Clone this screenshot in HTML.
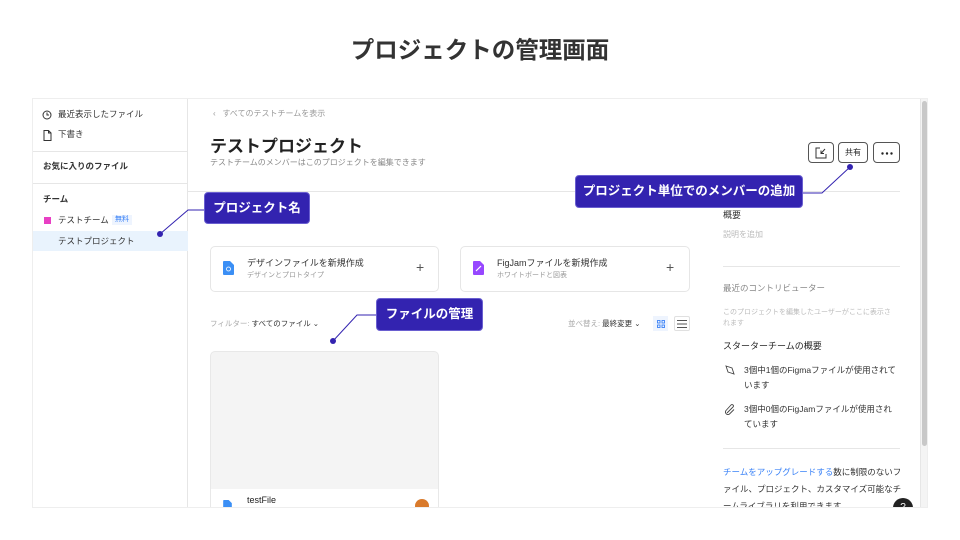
<!DOCTYPE html>
<html><head><meta charset="utf-8"><style>
*{box-sizing:border-box;margin:0;padding:0}
body{width:960px;height:540px;background:#fff;font-family:"Liberation Sans","Noto Sans CJK JP",sans-serif;position:relative;overflow:hidden;color:#222;line-height:1.2}
.a{position:absolute;white-space:nowrap}
.t{font-size:8.5px;color:#333}
.btn{position:absolute;border:1px solid #555;border-radius:4px;background:#fff}
.card{position:absolute;border:1px solid #e6e6e6;border-radius:5px;background:#fff}
.call{position:absolute;background:#3323b0;color:#fff;font-weight:bold;font-size:12.5px;border-radius:4px;text-align:center;border:1px solid #6a5fd0}
.hl{position:absolute;height:1px;background:#e6e6e6}
</style></head><body>
<div class="a" style="left:0;width:960px;top:36px;text-align:center;font-size:23.5px;font-weight:bold;color:#333">プロジェクトの管理画面</div>

<div class="a" style="left:32px;top:98px;width:896px;height:410px;border:1px solid #eee;overflow:hidden">
  <div class="a" style="left:0;top:0;width:155px;height:410px;border-right:1px solid #e6e6e6"></div>
  <svg class="a" style="left:9px;top:11px" width="10" height="10" viewBox="0 0 10 10"><circle cx="5" cy="5" r="4" fill="none" stroke="#333" stroke-width="1"/><path d="M5 2.5V5h2" fill="none" stroke="#333"/></svg>
  <div class="a t" style="left:25px;top:10px">最近表示したファイル</div>
  <svg class="a" style="left:10px;top:31px" width="9" height="11" viewBox="0 0 9 11"><path d="M1 .5h4.5L8 3v7.5H1z" fill="none" stroke="#333"/><path d="M5.5.5V3H8" fill="none" stroke="#333"/></svg>
  <div class="a t" style="left:25px;top:30px">下書き</div>
  <div class="hl" style="left:0;top:52px;width:155px"></div>
  <div class="a t" style="left:10px;top:62px;font-weight:bold">お気に入りのファイル</div>
  <div class="hl" style="left:0;top:84px;width:155px"></div>
  <div class="a t" style="left:10px;top:95px;font-weight:bold">チーム</div>
  <div class="a" style="left:11px;top:118px;width:7px;height:7px;background:#e83fc4"></div>
  <div class="a t" style="left:25px;top:116px">テストチーム</div>
  <div class="a" style="left:79px;top:116px;font-size:7px;color:#3a82f7;background:#eef4fe;padding:1px 3px">無料</div>
  <div class="a" style="left:0;top:132px;width:155px;height:20px;background:#e9f3fd"></div>
  <div class="a t" style="left:25px;top:137px">テストプロジェクト</div>

  <div class="a" style="left:180px;top:10px;font-size:8px;color:#999">‹&nbsp;&nbsp;&nbsp;すべてのテストチームを表示</div>
  <div class="a" style="left:177px;top:38px;font-size:17px;font-weight:bold;color:#222">テストプロジェクト</div>
  <div class="a" style="left:177px;top:59px;font-size:8px;color:#888">テストチームのメンバーはこのプロジェクトを編集できます</div>
  <div class="hl" style="left:155px;top:92px;width:712px"></div>

  <div class="btn" style="left:775px;top:43px;width:26px;height:21px"><svg style="position:absolute;left:6px;top:4px" width="12" height="12" viewBox="0 0 12 12"><path d="M5 1H1v10h10V7" fill="none" stroke="#333"/><path d="M10 2L6 6.5M6 3.5v3h3" fill="none" stroke="#333"/></svg></div>
  <div class="btn" style="left:805px;top:43px;width:30px;height:21px;font-size:8px;text-align:center;line-height:19px;color:#222">共有</div>
  <div class="btn" style="left:840px;top:43px;width:27px;height:21px"><svg style="position:absolute;left:7px;top:9px" width="12" height="3"><circle cx="1.5" cy="1.5" r="1.2" fill="#222"/><circle cx="6" cy="1.5" r="1.2" fill="#222"/><circle cx="10.5" cy="1.5" r="1.2" fill="#222"/></svg></div>

  <div class="card" style="left:177px;top:147px;width:229px;height:46px"></div>
  <svg class="a" style="left:190px;top:162px" width="11" height="14" viewBox="0 0 11 14"><path d="M0 1a1 1 0 011-1h6l4 4v9a1 1 0 01-1 1H1a1 1 0 01-1-1z" fill="#3b8ff5"/><circle cx="5.5" cy="8" r="2" fill="none" stroke="#fff" stroke-width=".8"/></svg>
  <div class="a" style="left:214px;top:159px;font-size:9px;color:#333">デザインファイルを新規作成</div>
  <div class="a" style="left:214px;top:173px;font-size:7px;color:#999">デザインとプロトタイプ</div>
  <div class="a" style="left:383px;top:160px;font-size:14px;color:#555">+</div>

  <div class="card" style="left:427px;top:147px;width:230px;height:46px"></div>
  <svg class="a" style="left:440px;top:162px" width="11" height="14" viewBox="0 0 11 14"><path d="M0 1a1 1 0 011-1h6l4 4v9a1 1 0 01-1 1H1a1 1 0 01-1-1z" fill="#9747ff"/><path d="M3 10l5-5" stroke="#fff" stroke-width="1.2"/></svg>
  <div class="a" style="left:464px;top:159px;font-size:9px;color:#333">FigJamファイルを新規作成</div>
  <div class="a" style="left:464px;top:173px;font-size:7px;color:#999">ホワイトボードと図表</div>
  <div class="a" style="left:633px;top:160px;font-size:14px;color:#555">+</div>

  <div class="a" style="left:177px;top:220px;font-size:7.5px;color:#aaa">フィルター: <span style="color:#333">すべてのファイル ⌄</span></div>
  <div class="a" style="left:535px;top:220px;font-size:7.5px;color:#aaa">並べ替え: <span style="color:#333">最終変更 ⌄</span></div>
  <div class="a" style="left:620px;top:217px;width:15px;height:15px;background:#eef4fe"></div>
  <svg class="a" style="left:624px;top:221px" width="8" height="8" viewBox="0 0 8 8"><g fill="none" stroke="#3a82f7" stroke-width=".9"><rect x=".5" y=".5" width="2.5" height="2.5"/><rect x="5" y=".5" width="2.5" height="2.5"/><rect x=".5" y="5" width="2.5" height="2.5"/><rect x="5" y="5" width="2.5" height="2.5"/></g></svg>
  <div class="a" style="left:641px;top:217px;width:16px;height:15px;border:1px solid #e0e0e0;border-radius:2px"></div>
  <svg class="a" style="left:644px;top:221px" width="10" height="8"><path d="M0 .5h10M0 4h10M0 7.5h10" stroke="#555"/></svg>

  <div class="card" style="left:177px;top:252px;width:229px;height:170px;background:#f4f4f4;border-color:#e8e8e8"></div>
  <div class="a" style="left:178px;top:390px;width:227px;height:30px;background:#fff"></div>
  <svg class="a" style="left:190px;top:401px" width="9" height="11" viewBox="0 0 11 14"><path d="M0 1a1 1 0 011-1h6l4 4v9a1 1 0 01-1 1H1a1 1 0 01-1-1z" fill="#3b8ff5"/></svg>
  <div class="a" style="left:214px;top:396px;font-size:9px;color:#222">testFile</div>
  <div class="a" style="left:382px;top:400px;width:14px;height:14px;border-radius:50%;background:#d97a2b"></div>

  <div class="a" style="left:690px;top:111px;font-size:9px;color:#333">概要</div>
  <div class="a" style="left:690px;top:131px;font-size:8px;color:#bbb">説明を追加</div>
  <div class="hl" style="left:690px;top:167px;width:177px"></div>
  <div class="a" style="left:690px;top:184px;font-size:8.5px;color:#888">最近のコントリビューター</div>
  <div class="a" style="left:690px;top:208px;font-size:7px;color:#bbb;line-height:11px">このプロジェクトを編集したユーザーがここに表示さ<br>れます</div>
  <div class="a" style="left:690px;top:242px;font-size:9px;color:#222">スターターチームの概要</div>
  <svg class="a" style="left:692px;top:266px" width="10" height="10" viewBox="0 0 10 10"><path d="M1 1l6 2 2 6-3-1-3-1z" fill="none" stroke="#444" stroke-width=".9"/></svg>
  <div class="a" style="left:711px;top:264px;font-size:8.5px;color:#333;line-height:15px">3個中1個のFigmaファイルが使用されて<br>います</div>
  <svg class="a" style="left:692px;top:305px" width="10" height="11" viewBox="0 0 10 11"><path d="M2 9l6-6a1.4 1.4 0 00-2-2L1 6.5a2.5 2.5 0 003.5 3.5L9 5.5" fill="none" stroke="#444" stroke-width=".9"/></svg>
  <div class="a" style="left:711px;top:303px;font-size:8.5px;color:#333;line-height:15px">3個中0個のFigJamファイルが使用され<br>ています</div>
  <div class="hl" style="left:690px;top:349px;width:177px"></div>
  <div class="a" style="left:690px;top:365px;font-size:8.5px;color:#333;line-height:17px"><span style="color:#3a82f7">チームをアップグレードする</span>数に制限のないフ<br>ァイル、プロジェクト、カスタマイズ可能なチ<br>ームライブラリを利用できます。</div>
  <div class="a" style="left:860px;top:399px;width:20px;height:20px;border-radius:50%;background:#222;color:#fff;font-size:10px;text-align:center;line-height:20px">?</div>
  <div class="a" style="left:887px;top:0;width:9px;height:410px;background:#f4f4f4;border-left:1px solid #e6e6e6"></div>
  <div class="a" style="left:889px;top:2px;width:5px;height:345px;background:#c8c8c8;border-radius:3px"></div>
</div>

<svg class="a" style="left:0;top:0" width="960" height="540">
  <path d="M160 234L188 210H205" fill="none" stroke="#3323b0" stroke-width="1"/>
  <circle cx="160" cy="234" r="3" fill="#3323b0"/>
  <path d="M803 193H822L850 167" fill="none" stroke="#3323b0" stroke-width="1"/>
  <circle cx="850" cy="167" r="3" fill="#3323b0"/>
  <path d="M333 341L357 315H377" fill="none" stroke="#3323b0" stroke-width="1"/>
  <circle cx="333" cy="341" r="3" fill="#3323b0"/>
</svg>
<div class="call" style="left:204px;top:192px;width:106px;height:32px;line-height:30px">プロジェクト名</div>
<div class="call" style="left:575px;top:175px;width:228px;height:33px;line-height:31px">プロジェクト単位でのメンバーの追加</div>
<div class="call" style="left:376px;top:298px;width:107px;height:33px;line-height:31px">ファイルの管理</div>
</body></html>
